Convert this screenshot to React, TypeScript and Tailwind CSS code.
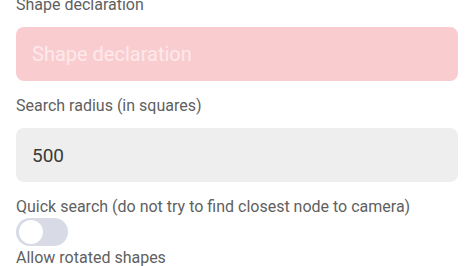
import { useState } from "react"

const font = { fontFamily: "Roboto, 'Noto Sans', sans-serif" }

function Field({ label, children }: { label: string; children: React.ReactNode }) {
  return (
    <div className="flex flex-col">
      <label className="text-[16px] leading-[24px] text-[#5f5f5f] mb-[10px]">{label}</label>
      {children}
    </div>
  )
}

export default function App() {
  const [quick, setQuick] = useState(false)

  return (
    <div className="w-[474px] h-[266px] overflow-hidden bg-white" style={font}>
      <div className="flex flex-col gap-[13px] px-4 -mt-[7px]">
        <Field label="Shape declaration">
          <input
            className="h-[54px] w-full rounded-lg bg-[#f9cdd0] px-4 text-[20px] text-[#444] outline-none placeholder:text-[#fde9eb]"
            placeholder="Shape declaration"
          />
        </Field>
        <Field label="Search radius (in squares)">
          <input
            className="h-[54px] w-full rounded-lg bg-[#eeeeee] px-4 text-[19px] text-[#3a3a3a] outline-none"
            defaultValue="500"
          />
        </Field>
        <div className="flex flex-col">
          <span className="text-[16px] leading-[24px] text-[#5f5f5f]">
            Quick search (do not try to find closest node to camera)
          </span>
          <button
            onClick={() => setQuick(!quick)}
            className={
              "relative mt-[-1px] h-[28px] w-[52px] rounded-full transition-colors " +
              (quick ? "bg-[#6b7be0]" : "bg-[#d8dbe6]")
            }
          >
            <span
              className={
                "absolute top-[2px] h-[24px] w-[24px] rounded-full bg-white transition-all " +
                (quick ? "left-[26px]" : "left-[3px]")
              }
            />
          </button>
          <span className="text-[16px] leading-[24px] text-[#5f5f5f]">Allow rotated shapes</span>
        </div>
      </div>
    </div>
  )
}
